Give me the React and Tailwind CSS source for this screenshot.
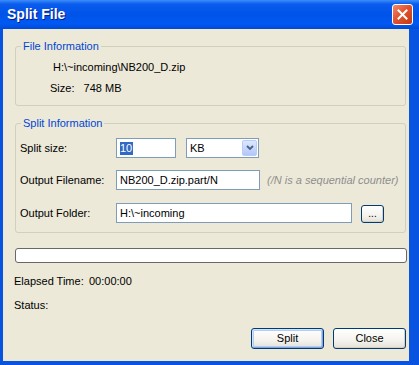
import React from 'react';

const font = { fontFamily: '"Liberation Sans", Arial, sans-serif' };

function GroupBox({ title, className, children }) {
  return (
    <div className={`relative border border-[#D0D0BF] rounded-[3px] ${className}`}>
      <span className="absolute -top-[7px] left-[5px] px-[2px] bg-[#ECE9D8] text-[#0046D5] leading-[13px]">
        {title}
      </span>
      {children}
    </div>
  );
}

function XpButton({ children, primary, className }) {
  return (
    <button
      type="button"
      className={`flex items-center justify-center border border-[#003C74] rounded-[3px] bg-[linear-gradient(to_bottom,#FFFFFF_0%,#F4F3EE_60%,#E3E0D6_100%)] text-black leading-[13px] ${
        primary
          ? 'shadow-[inset_1px_1px_0_#CEE7FF,inset_-1px_-1px_0_#7FA4E0,inset_0_0_0_2px_#B4CBF2]'
          : 'shadow-[inset_-1px_-1px_0_#D6D0C5]'
      } ${className}`}
    >
      {children}
    </button>
  );
}

export default function App() {
  return (
    <div style={font} className="w-[419px] h-[365px] flex flex-col bg-[#0853E0] text-[11px] text-black">
      {/* Title bar */}
      <div className="h-[29px] flex items-center justify-between pl-[7px] pr-[6px] bg-[linear-gradient(to_bottom,#3D8EF8_0%,#0A5CEE_14%,#0053E8_50%,#0059F2_82%,#0049D6_100%)]">
        <span className="text-white font-bold text-[14px] [text-shadow:1px_1px_0_#0A1E8A]">Split File</span>
        <div className="w-[21px] h-[21px] rounded-[3px] border border-white bg-[linear-gradient(135deg,#EF8C70_0%,#E2532F_45%,#C13A12_100%)] flex items-center justify-center">
          <svg width="11" height="11" viewBox="0 0 11 11">
            <path d="M1.5 1.5 L9.5 9.5 M9.5 1.5 L1.5 9.5" stroke="white" strokeWidth="2" strokeLinecap="square" />
          </svg>
        </div>
      </div>

      {/* Body */}
      <div className="flex-1 ml-[3px] mr-[10px] mb-[4px] bg-[#ECE9D8] flex flex-col pl-[12px] pr-[3px] pb-[12px]">
        <GroupBox title="File Information" className="mt-[17px] w-[391px] h-[60px]">
          <div className="pl-[37px] pt-[14px] leading-[13px]">H:\~incoming\NB200_D.zip</div>
          <div className="pl-[34px] pt-[8px] leading-[13px]">Size:&nbsp;&nbsp; 748 MB</div>
        </GroupBox>

        <GroupBox title="Split Information" className="mt-[17px] w-[391px] h-[110px]">
          <div className="pl-[4px] pt-[14px] flex flex-col">
            <div className="flex items-center h-[20px]">
              <span className="w-[96px]">Split size:</span>
              <div className="w-[60px] h-[20px] border border-[#7F9DB9] bg-white flex items-center pl-[3px]">
                <span className="bg-[#316AC5] text-white leading-[13px] pr-[1px]">10</span>
              </div>
              <div className="ml-[10px] w-[73px] h-[20px] border border-[#7F9DB9] bg-white flex items-center justify-between pl-[3px] pr-[1px]">
                <span>KB</span>
                <div className="w-[15px] h-[16px] rounded-[2px] border border-[#B9CCF9] bg-[linear-gradient(to_bottom,#DDE8FE_0%,#C5D6FC_55%,#B2C7F8_100%)] flex items-center justify-center">
                  <svg width="8" height="6" viewBox="0 0 8 6">
                    <path d="M1 1 L4 4 L7 1" stroke="#4D6185" strokeWidth="1.8" fill="none" />
                  </svg>
                </div>
              </div>
            </div>

            <div className="flex items-center h-[20px] mt-[12px]">
              <span className="w-[96px]">Output Filename:</span>
              <div className="w-[144px] h-[20px] border border-[#7F9DB9] bg-white flex items-center pl-[3px]">
                NB200_D.zip.part/N
              </div>
              <span className="ml-[7px] italic text-[#8E8E8E]">(/N is a sequential counter)</span>
            </div>

            <div className="flex items-center h-[20px] mt-[13px]">
              <span className="w-[96px]">Output Folder:</span>
              <div className="w-[236px] h-[20px] border border-[#7F9DB9] bg-white flex items-center pl-[3px]">
                H:\~incoming
              </div>
              <XpButton className="ml-[9px] w-[23px] h-[18px] mt-[2px]">
                <span className="text-[10px] leading-[8px]">...</span>
              </XpButton>
            </div>
          </div>
        </GroupBox>

        <div className="mt-[15px] w-[392px] h-[15px] border border-[#686868] rounded-[3px] bg-white" />

        <div className="mt-[12px] leading-[13px] -ml-[1px] flex">
          <span className="w-[75px]">Elapsed Time:</span>
          <span>00:00:00</span>
        </div>
        <div className="mt-[11px] leading-[13px] -ml-[1px]">Status:</div>

        <div className="mt-auto flex justify-end gap-[9px]">
          <XpButton primary className="w-[73px] h-[21px]">Split</XpButton>
          <XpButton className="w-[73px] h-[21px]">Close</XpButton>
        </div>
      </div>
    </div>
  );
}
